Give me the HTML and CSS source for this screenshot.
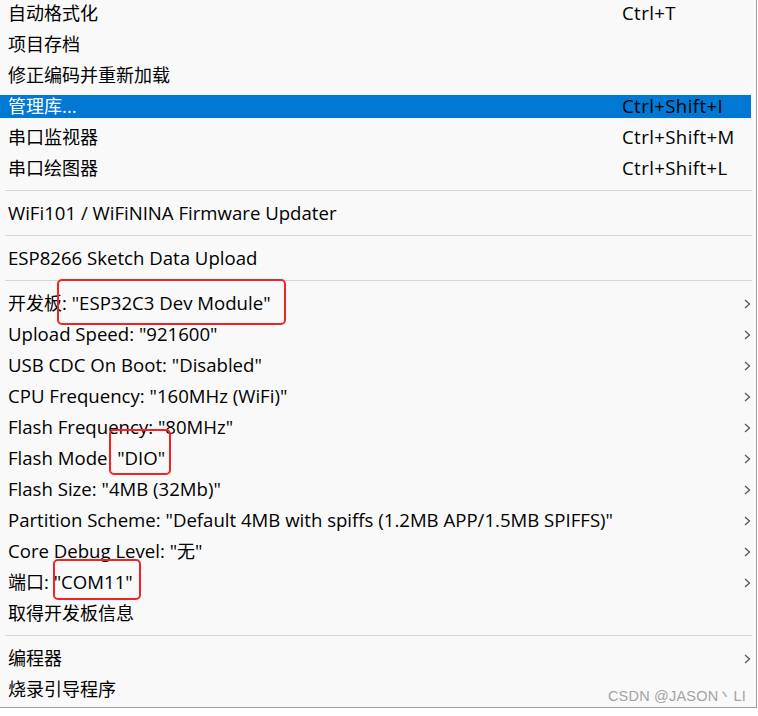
FILE: index.html
```html
<!DOCTYPE html>
<html lang="zh">
<head>
<meta charset="utf-8">
<title>Tools menu</title>
<link rel="stylesheet" href="styles.css">
</head>
<body>
<div class="menu">
  <div class="list">
    <div class="item"><span class="label"><span class="zh">自动格式化</span></span><span class="key">Ctrl+T</span></div>
    <div class="item"><span class="label"><span class="zh">项目存档</span></span></div>
    <div class="item"><span class="label"><span class="zh">修正编码并重新加载</span></span></div>
    <div class="item active"><span class="label"><span class="zh">管理库</span>...</span><span class="key">Ctrl+Shift+I</span></div>
    <div class="item"><span class="label"><span class="zh">串口监视器</span></span><span class="key">Ctrl+Shift+M</span></div>
    <div class="item"><span class="label"><span class="zh">串口绘图器</span></span><span class="key">Ctrl+Shift+L</span></div>
    <div class="sep"></div>
    <div class="item"><span class="label">WiFi101 / WiFiNINA Firmware Updater</span></div>
    <div class="sep"></div>
    <div class="item"><span class="label">ESP8266 Sketch Data Upload</span></div>
    <div class="sep"></div>
    <div class="item sub"><span class="label"><span class="zh">开发板</span>: "ESP32C3 Dev Module"</span><svg class="chev" viewBox="0 0 7 10"><polyline points="1,1 5.5,5 1,9"/></svg></div>
    <div class="item sub"><span class="label">Upload Speed: "921600"</span><svg class="chev" viewBox="0 0 7 10"><polyline points="1,1 5.5,5 1,9"/></svg></div>
    <div class="item sub"><span class="label">USB CDC On Boot: "Disabled"</span><svg class="chev" viewBox="0 0 7 10"><polyline points="1,1 5.5,5 1,9"/></svg></div>
    <div class="item sub"><span class="label">CPU Frequency: "160MHz (WiFi)"</span><svg class="chev" viewBox="0 0 7 10"><polyline points="1,1 5.5,5 1,9"/></svg></div>
    <div class="item sub"><span class="label">Flash Frequency: "80MHz"</span><svg class="chev" viewBox="0 0 7 10"><polyline points="1,1 5.5,5 1,9"/></svg></div>
    <div class="item sub"><span class="label">Flash Mode: "DIO"</span><svg class="chev" viewBox="0 0 7 10"><polyline points="1,1 5.5,5 1,9"/></svg></div>
    <div class="item sub"><span class="label">Flash Size: "4MB (32Mb)"</span><svg class="chev" viewBox="0 0 7 10"><polyline points="1,1 5.5,5 1,9"/></svg></div>
    <div class="item sub"><span class="label">Partition Scheme: "Default 4MB with spiffs (1.2MB APP/1.5MB SPIFFS)"</span><svg class="chev" viewBox="0 0 7 10"><polyline points="1,1 5.5,5 1,9"/></svg></div>
    <div class="item sub"><span class="label">Core Debug Level: "<span class="zh">无</span>"</span><svg class="chev" viewBox="0 0 7 10"><polyline points="1,1 5.5,5 1,9"/></svg></div>
    <div class="item sub"><span class="label"><span class="zh">端口</span>: "COM11"</span><svg class="chev" viewBox="0 0 7 10"><polyline points="1,1 5.5,5 1,9"/></svg></div>
    <div class="item"><span class="label"><span class="zh">取得开发板信息</span></span></div>
    <div class="sep"></div>
    <div class="item sub"><span class="label"><span class="zh">编程器</span></span><svg class="chev" viewBox="0 0 7 10"><polyline points="1,1 5.5,5 1,9"/></svg></div>
    <div class="item"><span class="label"><span class="zh">烧录引导程序</span></span></div>
  </div>
  <div class="mark mark-board"></div>
  <div class="mark mark-dio"></div>
  <div class="mark mark-port"></div>
  <div class="watermark">CSDN @JASON丶LI</div>
</div>
</body>
</html>
```
FILE: styles.css
```css
html, body {
  margin: 0;
  padding: 0;
  background: #ffffff;
}
body {
  width: 758px;
  height: 716px;
  overflow: hidden;
  font-family: "Open Sans", "Noto Sans CJK SC", sans-serif;
  font-size: 18.6px;
  color: #000;
}
.menu {
  position: relative;
  width: 756px;
  background: #f9f9f9;
  border-right: 1px solid #a0a0a0;
  border-bottom: 1px solid #a0a0a0;
  padding-bottom: 2px;
}
.list {
  display: flex;
  flex-direction: column;
  margin-top: -2px;
}
.item {
  height: 31px;
  padding: 4px 0;
  box-sizing: border-box;
  margin-right: 5px;
  display: flex;
  align-items: center;
  background-clip: content-box;
  border-radius: 0 4px 4px 0;
  white-space: nowrap;
}
.item .label {
  padding-left: 8px;
  margin-top: -3px;
  flex: 1;
}
.zh {
  font-family: "Noto Sans CJK SC", sans-serif;
  font-size: 18px;
}
.item .key {
  width: 129px;
  margin-top: -3px;
  letter-spacing: 0.4px;
}
.item.active {
  background-color: #0078d4;
}
.item.active .label {
  color: #fff;
}
.chev {
  width: 7px;
  height: 10px;
  margin-right: 0;
  fill: none;
  stroke: #555;
  stroke-width: 1.3;
}
.sep {
  height: 14px;
  padding: 6px 4px 7px 5px;
  box-sizing: border-box;
}
.sep::after {
  content: "";
  display: block;
  height: 1px;
  background: #d6d6d6;
}
.mark {
  position: absolute;
  border: 2.5px solid #f02424;
  border-radius: 5px;
  box-sizing: border-box;
}
.mark-board {
  left: 57px;
  top: 281px;
  width: 229px;
  height: 46px;
}
.mark-dio {
  left: 109px;
  top: 431px;
  width: 62px;
  height: 46px;
}
.mark-port {
  left: 53px;
  top: 561px;
  width: 88px;
  height: 41px;
}
.watermark {
  position: absolute;
  right: 10px;
  bottom: 1px;
  font-family: "Liberation Sans", Arial, sans-serif;
  font-size: 14.5px;
  color: #a3a3a3;
  letter-spacing: 0.2px;
}
```
